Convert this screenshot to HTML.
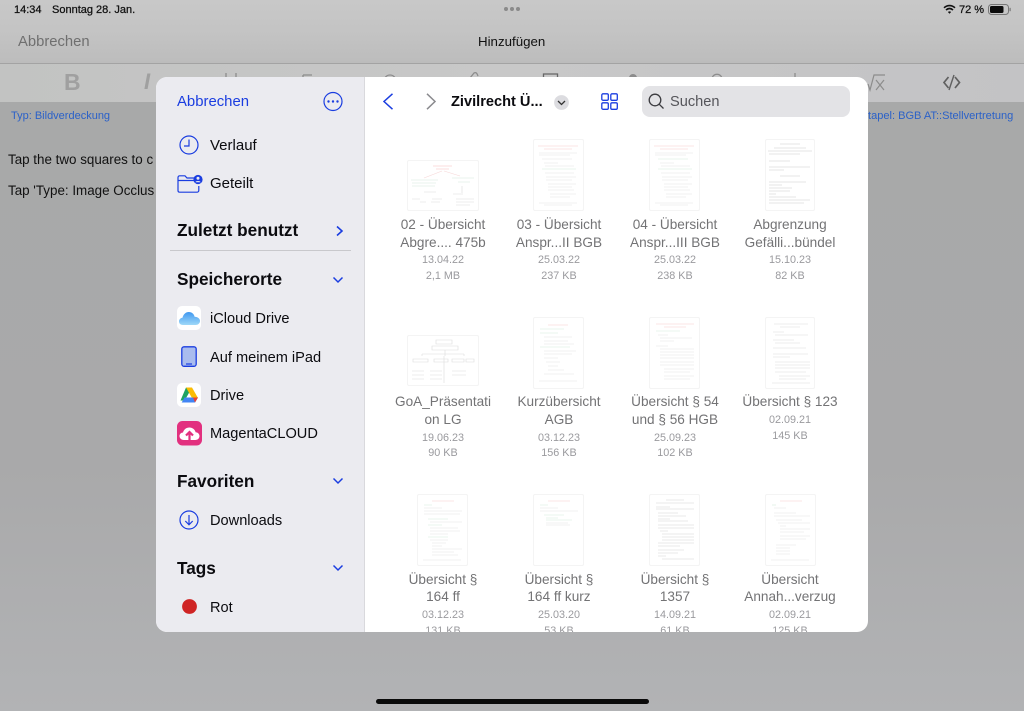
<!DOCTYPE html>
<html lang="de"><head><meta charset="utf-8"><title>Hinzufügen</title>
<style>
html,body{margin:0;padding:0}
body{width:1024px;height:711px;position:relative;overflow:hidden;background:#acadae;font-family:"Liberation Sans",sans-serif;color:#000}
.t{position:absolute;white-space:nowrap;line-height:20px;height:20px}
.c{position:absolute;white-space:nowrap;text-align:center;width:116px;line-height:18px;height:18px}
.n{font-size:13.6px;color:#737375}
.d{font-size:10.8px;color:#9a9a9e}
.s{font-size:14.6px;color:#0b0b0f;left:54px}
.h{font-size:17.2px;font-weight:bold;color:#0b0b0f;left:21px}
.st{font-size:11px;color:#111;-webkit-text-stroke:.25px #111}
svg{position:absolute;overflow:visible}
#sheet{position:absolute;left:156px;top:77px;width:712px;height:555px;background:#fff;border-radius:11px;overflow:hidden}
#side{position:absolute;left:0;top:0;width:208px;height:555px;background:#ebebf0;border-right:1px solid #d9d9dd}
.p{position:absolute;width:51px;height:72px;background:#fff;border:1px solid #f4f4f4;border-radius:2px;box-sizing:border-box}
.l{position:absolute;width:72px;height:51px;background:#fff;border:1px solid #f4f4f4;border-radius:2px;box-sizing:border-box}
.p svg,.l svg{left:0;top:0;opacity:.42;filter:blur(.35px)}
.p path,.l path{stroke-width:.6}
</style></head><body>
<div style="position:absolute;left:0;top:0;width:1024px;height:64px;background:linear-gradient(180deg,#c8c8c8 0,#c4c4c4 30px,#bcbcbc 64px)"></div>
<div style="position:absolute;left:0;top:63px;width:1024px;height:1px;background:#a3a3a3"></div>
<div style="position:absolute;left:0;top:64px;width:1024px;height:38px;background:linear-gradient(90deg,#c2c3c2,#c8c8c8 50%,#c3c3c5)"></div>
<div style="position:absolute;left:0;top:102px;width:1024px;height:609px;background:linear-gradient(180deg,#a8a9a9 0,#a9a9aa 60%,#b2b3b5 100%)"></div>

<div class="t st" style="left:14px;top:0">14:34</div>
<div class="t st" style="left:52px;top:0">Sonntag 28. Jan.</div>
<svg style="left:503px;top:6px" width="18" height="6"><circle cx="3" cy="3" r="2" fill="#8a8a8a"/><circle cx="9" cy="3" r="2" fill="#8a8a8a"/><circle cx="15" cy="3" r="2" fill="#8a8a8a"/></svg>
<svg style="left:943px;top:4px" width="13" height="11" viewBox="0 0 13 11" fill="none" stroke="#111"><path d="M1 3.8C4.4 .8 8.6 .8 12 3.8" stroke-width="1.6"/><path d="M3 6C5.2 4.1 7.8 4.1 10 6" stroke-width="1.6"/><path d="M6.5 9.8 4.9 8C5.8 7.2 7.2 7.2 8.1 8z" fill="#111" stroke="none"/></svg>
<div class="t st" style="left:959px;top:0">72 %</div>
<svg style="left:988px;top:4px" width="24" height="12"><rect x=".5" y=".5" width="20" height="10" rx="3" fill="none" stroke="#777"/><rect x="2" y="2" width="13.5" height="7" rx="1.5" fill="#0c0c0c"/><rect x="21.5" y="3.8" width="1.2" height="3.5" rx=".6" fill="#777"/></svg>

<div class="t" style="left:18px;top:32px;font-size:14.8px;color:#6f6f6f">Abbrechen</div>
<div class="t" style="left:478px;top:32px;font-size:13.3px;color:#111">Hinzufügen</div>

<div class="t" style="left:64px;top:72px;font-size:23px;font-weight:bold;color:#a0a0a0">B</div>
<div class="t" style="left:144px;top:72px;font-size:22px;font-weight:bold;font-style:italic;color:#a0a0a0">I</div>
<svg style="left:0;top:0" width="1024" height="80" fill="none" stroke="#8c8c8c" stroke-width="1.3"><path d="M226 73V78M236 73V78M303 75H312M303 75V78"/><path d="M385 78C387 74 393 74 395 78M470 78 474 73C476 72 477 73 478 76"/><path d="M543.500 78V74H557.500V78" stroke="#666"/><circle cx="633" cy="78" r="4" fill="#8c8c8c" stroke="none"/><path d="M712 78C714 73 720 73 722 78M795 78V73"/></svg>
<svg style="left:860px;top:72px" width="108" height="22" fill="none" stroke="#8c8c8c"><path d="M8 12 10 18 14 3H25M16 8 24 18M24 8 16 18" stroke-width="1.2"/><path d="M88.500 5 84 10.500 88.500 16M95 5 99.500 10.500 95 16" stroke="#606060" stroke-width="1.7"/><path d="M94 3 89 18" stroke="#606060" stroke-width="1.4"/></svg>

<div class="t" style="left:11px;top:106px;font-size:11px;color:#2b61c8">Typ: Bildverdeckung</div>
<div class="t" style="left:868px;top:106px;font-size:11.05px;color:#2b61c8">tapel: BGB AT::Stellvertretung</div>
<div class="t" style="left:8px;top:150px;font-size:13.4px;color:#111">Tap the two squares to c</div>
<div class="t" style="left:8px;top:181px;font-size:13.4px;color:#111">Tap 'Type: Image Occlus</div>

<div id="sheet">
 <div id="side">
  <div class="t" style="left:21px;top:15px;font-size:14.9px;color:#1a3de0">Abbrechen</div>
  <svg style="left:167px;top:15px" width="20" height="20" fill="none"><circle cx="10" cy="9.500" r="9" stroke="#1a3de0" stroke-width="1.2"/><circle cx="5.500" cy="9.500" r="1.200" fill="#1a3de0"/><circle cx="10" cy="9.500" r="1.200" fill="#1a3de0"/><circle cx="14.500" cy="9.500" r="1.200" fill="#1a3de0"/></svg>

  <svg style="left:23px;top:58px" width="20" height="20" fill="none" stroke="#1a3de0" stroke-width="1.2"><circle cx="10" cy="10" r="9"/><path d="M10 4.500V11H5"/></svg>
  <div class="t s" style="top:59px;font-size:15px">Verlauf</div>
  <svg style="left:21px;top:97px" width="26" height="20" fill="none" stroke="#1a3de0" stroke-width="1.2"><path d="M1 5V3.500C1 2.500 1.700 1.800 2.700 1.800H8L10 4H17M1 6.500H17M1 5V16.500C1 17.500 1.700 18.200 2.700 18.200H20C21 18.200 21.800 17.500 21.800 16.500V12"/><circle cx="21" cy="5.500" r="4.600" fill="#1a3de0" stroke="none"/><circle cx="21" cy="4.200" r="1.500" fill="#ebebf0" stroke="none"/><path d="M18.400 8.200C19 6.600 23 6.600 23.600 8.200z" fill="#ebebf0" stroke="none"/></svg>
  <div class="t s" style="top:97px;font-size:15px">Geteilt</div>

  <div class="t h" style="top:143px">Zuletzt benutzt</div>
  <svg style="left:178px;top:148px" width="10" height="12" fill="none" stroke="#1a3de0" stroke-width="1.6"><path d="M3 1.500 8 6 3 10.500"/></svg>
  <div style="position:absolute;left:14px;top:173px;width:181px;height:1px;background:#c8c8cc"></div>

  <div class="t h" style="top:192px">Speicherorte</div>
  <svg style="left:176px;top:198px" width="12" height="10" fill="none" stroke="#1a3de0" stroke-width="1.5"><path d="M1.500 2.500 6 7 10.500 2.500"/></svg>

  <svg style="left:21px;top:229px" width="24" height="24"><rect width="24" height="24" rx="5" fill="#fff"/><defs><linearGradient id="ic" x1="0" y1="0" x2="0" y2="1"><stop offset="0" stop-color="#3f97f0"/><stop offset="1" stop-color="#9fd8f8"/></linearGradient></defs><path d="M6 19C3 19 2 17 2 15.500 2 13.500 3.500 12 5.500 11.800 6.300 8.300 8.800 6 11.800 6 14.800 6 17 8 17.600 10.800 20.600 10.800 23 12.600 23 15 23 17.300 21 19 18.600 19z" fill="url(#ic)"/></svg>
  <div class="t s" style="top:232px">iCloud Drive</div>

  <svg style="left:25px;top:269px" width="16" height="22"><rect x=".8" y=".8" width="14.400" height="19.500" rx="2.200" fill="#a9bcee" stroke="#1a3de0" stroke-width="1.300"/><rect x="5" y="17.400" width="6" height="1.200" fill="#1a3de0"/></svg>
  <div class="t s" style="top:271px">Auf meinem iPad</div>

  <svg style="left:21px;top:306px" width="24" height="24"><rect width="24" height="24" rx="5" fill="#fff"/><path d="M9 4.500H15L10.500 12.500 7.500 17.500 3.500 17.500z" fill="#1ea362"/><path d="M9 4.500H15L21 15H15z" fill="#fbbc04"/><path d="M7.500 14.500H21L18 19.500H4.700z" fill="#4285f4"/><path d="M16 14.500H21L18 19.500z" fill="#ea4335"/></svg>
  <div class="t s" style="top:309px">Drive</div>

  <svg style="left:21px;top:344px" width="26" height="26"><rect width="25" height="24.500" rx="5.500" fill="#e2307f"/><path d="M7 19C4 19 2.500 17 2.500 15 2.500 13 4.200 11.500 6 11.500 6.800 8.500 9.200 6.500 12.400 6.500 15.600 6.500 18 8.700 18.600 11.200 20.800 11.200 22.500 13 22.500 15 22.500 17.200 20.800 19 18.200 19z" fill="#fff"/><path d="M12.500 20V12M9 14.500 12.500 11 16 14.500" fill="none" stroke="#e2307f" stroke-width="2.200"/></svg>
  <div class="t s" style="top:347px">MagentaCLOUD</div>

  <div class="t h" style="top:394px">Favoriten</div>
  <svg style="left:176px;top:399px" width="12" height="10" fill="none" stroke="#1a3de0" stroke-width="1.500"><path d="M1.500 2.500 6 7 10.500 2.500"/></svg>
  <svg style="left:23px;top:433px" width="20" height="20" fill="none" stroke="#1a3de0" stroke-width="1.200"><circle cx="10" cy="10" r="9"/><path d="M10 5V14.500M6.300 11 10 14.800 13.700 11"/></svg>
  <div class="t s" style="top:434px">Downloads</div>

  <div class="t h" style="top:481px">Tags</div>
  <svg style="left:176px;top:486px" width="12" height="10" fill="none" stroke="#1a3de0" stroke-width="1.500"><path d="M1.500 2.500 6 7 10.500 2.500"/></svg>
  <svg style="left:26px;top:522px" width="15" height="15"><circle cx="7.500" cy="7.500" r="7.400" fill="#cf2424"/></svg>
  <div class="t s" style="top:521px">Rot</div>
 </div>

 <svg style="left:227px;top:16px" width="12" height="18" fill="none" stroke="#1a3de0" stroke-width="1.500"><path d="M9.500 .8 1 8.500 9.500 16.200"/></svg>
 <svg style="left:270px;top:16px" width="12" height="18" fill="none" stroke="#8a8a8e" stroke-width="1.500"><path d="M1 .8 9 8.500 1 16.200"/></svg>
 <div class="t" style="left:295px;top:15px;font-size:14.600px;font-weight:bold;color:#0b0b0f">Zivilrecht Ü...</div>
 <svg style="left:398px;top:18px" width="16" height="16" fill="none"><circle cx="7.500" cy="7.500" r="7.400" fill="#dcdce0"/><path d="M4 6 7.500 9.500 11 6" stroke="#333" stroke-width="1.300"/></svg>
 <svg style="left:445px;top:16px" width="19" height="18" fill="none" stroke="#1a3de0" stroke-width="1.300"><rect x=".8" y=".8" width="6.500" height="6.500" rx="1.200"/><rect x="9.800" y=".8" width="6.500" height="6.500" rx="1.200"/><rect x=".8" y="9.800" width="6.500" height="6.500" rx="1.200"/><rect x="9.800" y="9.800" width="6.500" height="6.500" rx="1.200"/></svg>
 <div style="position:absolute;left:486px;top:9px;width:208px;height:31px;background:#e3e3e6;border-radius:8px"></div>
 <svg style="left:492px;top:16px" width="17" height="17" fill="none" stroke="#3c3c40" stroke-width="1.300"><circle cx="7" cy="7" r="5.800"/><path d="M11.300 11.300 15.500 15.500"/></svg>
 <div class="t" style="left:514px;top:15px;font-size:14.600px;color:#55555a">Suchen</div>

 <!-- Thumbnails row 1 -->
 <div class="l" style="left:251px;top:83px"><svg width="70" height="49" fill="none"><path d="M25 5H44M28 8H41" stroke="#e66"/><path d="M34 10 16 17M36 10 52 15" stroke="#e9a0a0"/><path d="M3 19H30M4 22H28M4 25H27M44 17H66M50 21H62" stroke="#9ccaaa"/><path d="M16 31H28M12 41H18M23 41H32M4 38H12M24 38H34M45 33H55M48 38H66M48 41H66M48 44H62M54 25V32" stroke="#aaa"/></svg></div>
 <div class="p" style="left:377px;top:62px"><svg width="49" height="70" fill="none"><path d="M4 6H44M10 9H38" stroke="#f08080"/><path d="M5 13H43M5 15H36M8 19H38" stroke="#bbb"/><path d="M8 29H42" stroke="#96d0aa"/><path d="M10 23H24M11 26H40M11 33H40M12 37H42M12 40H38M14 44H42M14 47H38M14 50H40M16 54H42M16 57H36M5 63H43M10 65H38" stroke="#bbb"/></svg></div>
 <div class="p" style="left:493px;top:62px"><svg width="49" height="70" fill="none"><path d="M4 6H44M10 9H38" stroke="#f08080"/><path d="M5 13H43M5 15H36" stroke="#bbb"/><path d="M8 19H38M8 29H42" stroke="#96d0aa"/><path d="M10 23H24M11 26H40M11 33H40M12 37H42M12 40H38M14 44H42M14 47H38M14 50H40M16 54H42M16 57H36M5 63H43M10 65H38" stroke="#bbb"/></svg></div>
 <div class="p" style="left:609px;top:62px;width:50px"><svg width="48" height="70" fill="none"><path d="M14 4H34M8 8H40M2 11H46M3 14H34M3 21H24M3 27H44M3 30H18M14 36H34M3 42H40M3 45H16M3 48H26M3 51H24M3 54H10M3 57H30M3 60H44M3 63H38" stroke="#888"/></svg></div>
 <!-- Row 2 -->
 <div class="l" style="left:251px;top:258px"><svg width="70" height="49" fill="none"><path stroke="#aaa" d="M28 4H44V8H28zM24 10H50V14H24zM37 14V18M14 18H56M14 18V20M37 18V20M56 18V20M5 23H20V26H5zM26 23H40V26H26zM44 23H56V26H44zM58 23H66V26H58zM4 35H16M22 35H34M44 35H58M4 39H16M22 39H34M44 39H58M4 43H16M22 43H34M36 20V47"/></svg></div>
 <div class="p" style="left:377px;top:240px"><svg width="49" height="70" fill="none"><path d="M14 7H34" stroke="#f08080"/><path d="M6 11H30M6 15H24M6 29H36" stroke="#96d0aa"/><path d="M10 19H38M10 23H34M10 26H40M10 33H42M10 36H38M10 40H24M12 44H26M14 48H24M14 52H30M10 56H40M5 63H43" stroke="#bbb"/></svg></div>
 <div class="p" style="left:493px;top:240px"><svg width="49" height="70" fill="none"><path d="M6 6H44M14 9H36" stroke="#f08080"/><path d="M6 13H30" stroke="#96d0aa"/><path d="M8 17H18M10 20H42M10 23H24M6 28H18M10 31H44M10 34H44M10 37H44M10 40H44M10 44H44M10 47H44M14 51H44M14 54H40M14 58H44M14 61H40" stroke="#c0c0c0"/></svg></div>
 <div class="p" style="left:609px;top:240px;width:50px"><svg width="48" height="70" fill="none"><path d="M8 6H42M14 9H34M7 14H18M9 17H42M7 22H28M9 25H34M7 30H40M7 36H42M7 39H24M9 44H44M9 47H44M9 50H44M9 54H40M13 58H44M13 61H40M6 65H44" stroke="#aaa"/></svg></div>
 <!-- Row 3 -->
 <div class="p" style="left:261px;top:417px"><svg width="49" height="70" fill="none"><path d="M14 6H36" stroke="#f08080"/><path d="M6 10H14M10 24H30M10 30H24M10 42H30" stroke="#96d0aa"/><path d="M6 13H24M6 16H44M6 19H42M12 27H44M12 33H40M12 36H42M12 39H30M12 45H30M14 48H28M14 51H24M14 54H44M14 57H36M14 60H40M5 65H43" stroke="#bbb"/></svg></div>
 <div class="p" style="left:377px;top:417px"><svg width="49" height="70" fill="none"><path d="M14 6H36" stroke="#f08080"/><path d="M6 10H14M10 20H30M12 23H24M12 25H38" stroke="#96d0aa"/><path d="M6 13H24M6 16H44M12 28H34M12 30H36" stroke="#bbb"/></svg></div>
 <div class="p" style="left:493px;top:417px"><svg width="49" height="70" fill="none"><path d="M16 5H34M6 8H44M6 12H20M6 14H44M8 18H28M8 21H36M8 24H20M8 26H38M8 30H44M8 33H44M10 36H18M12 39H44M12 42H44M12 45H44M8 48H44M8 51H30M8 55H34M8 58H28M8 61H16M12 64H44" stroke="#999"/></svg></div>
 <div class="p" style="left:609px;top:417px"><svg width="49" height="70" fill="none"><path d="M14 6H36" stroke="#f08080"/><path d="M6 10H10" stroke="#96d0aa"/><path d="M8 13H20M8 18H30M8 21H44M10 25H36M12 28H44M14 31H20M14 34H44M14 37H38M14 41H44M14 44H40M10 50H30M10 53H24M10 56H24M10 59H24M5 65H43" stroke="#bbb"/></svg></div>

 <!-- Labels -->
 <div class="c n" style="left:229px;top:139px">02 - Übersicht</div><div class="c n" style="left:229px;top:157px">Abgre.... 475b</div><div class="c d" style="left:229px;top:174px">13.04.22</div><div class="c d" style="left:229px;top:190px">2,1 MB</div>
 <div class="c n" style="left:345px;top:139px">03 - Übersicht</div><div class="c n" style="left:345px;top:157px">Anspr...II BGB</div><div class="c d" style="left:345px;top:174px">25.03.22</div><div class="c d" style="left:345px;top:190px">237 KB</div>
 <div class="c n" style="left:461px;top:139px">04 - Übersicht</div><div class="c n" style="left:461px;top:157px">Anspr...III BGB</div><div class="c d" style="left:461px;top:174px">25.03.22</div><div class="c d" style="left:461px;top:190px">238 KB</div>
 <div class="c n" style="left:576px;top:139px">Abgrenzung</div><div class="c n" style="left:576px;top:157px">Gefälli...bündel</div><div class="c d" style="left:576px;top:174px">15.10.23</div><div class="c d" style="left:576px;top:190px">82 KB</div>

 <div class="c n" style="left:229px;top:316px">GoA_Präsentati</div><div class="c n" style="left:229px;top:334px">on LG</div><div class="c d" style="left:229px;top:352px">19.06.23</div><div class="c d" style="left:229px;top:367px">90 KB</div>
 <div class="c n" style="left:345px;top:316px">Kurzübersicht</div><div class="c n" style="left:345px;top:334px">AGB</div><div class="c d" style="left:345px;top:352px">03.12.23</div><div class="c d" style="left:345px;top:367px">156 KB</div>
 <div class="c n" style="left:461px;top:316px">Übersicht § 54</div><div class="c n" style="left:461px;top:334px">und § 56 HGB</div><div class="c d" style="left:461px;top:352px">25.09.23</div><div class="c d" style="left:461px;top:367px">102 KB</div>
 <div class="c n" style="left:576px;top:316px">Übersicht § 123</div><div class="c d" style="left:576px;top:334px">02.09.21</div><div class="c d" style="left:576px;top:350px">145 KB</div>

 <div class="c n" style="left:229px;top:494px">Übersicht §</div><div class="c n" style="left:229px;top:511px">164 ff</div><div class="c d" style="left:229px;top:529px">03.12.23</div><div class="c d" style="left:229px;top:545px">131 KB</div>
 <div class="c n" style="left:345px;top:494px">Übersicht §</div><div class="c n" style="left:345px;top:511px">164 ff kurz</div><div class="c d" style="left:345px;top:529px">25.03.20</div><div class="c d" style="left:345px;top:545px">53 KB</div>
 <div class="c n" style="left:461px;top:494px">Übersicht §</div><div class="c n" style="left:461px;top:511px">1357</div><div class="c d" style="left:461px;top:529px">14.09.21</div><div class="c d" style="left:461px;top:545px">61 KB</div>
 <div class="c n" style="left:576px;top:494px">Übersicht</div><div class="c n" style="left:576px;top:511px">Annah...verzug</div><div class="c d" style="left:576px;top:529px">02.09.21</div><div class="c d" style="left:576px;top:545px">125 KB</div>
</div>

<div style="position:absolute;left:376px;top:699px;width:273px;height:5px;border-radius:3px;background:#0a0a0a"></div>
</body></html>
